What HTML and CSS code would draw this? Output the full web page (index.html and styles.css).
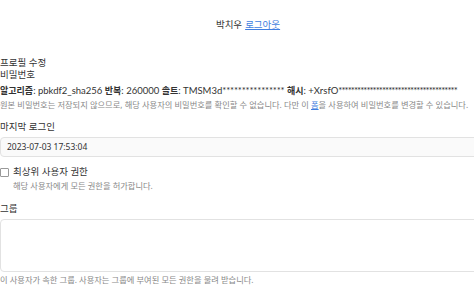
FILE: index.html
```html
<!DOCTYPE html>
<html lang="ko">
<head>
<meta charset="utf-8">
<link rel="stylesheet" href="styles.css">
</head>
<body>
<header class="top">
  <span class="user">박치우</span> <a class="link" href="#">로그아웃</a>
</header>
<main class="content">
  <h1 class="title">프로필 수정</h1>
  <div class="label">비밀번호</div>
  <p class="hash"><b>알고리즘</b>: pbkdf2_sha256 <b>반복</b>: 260000 <b>솔트</b>: TMSM3d<span class="mask salt">****************</span> <b>해시</b>: +XrsfO<span class="mask digest">**************************************</span></p>
  <p class="help">원본 비밀번호는 저장되지 않으므로, 해당 사용자의 비밀번호를 확인할 수 없습니다. 다만 이 <a class="link" href="#">폼</a>을 사용하여 비밀번호를 변경할 수 있습니다.</p>
  <div class="label gap">마지막 로그인</div>
  <div class="field">2023-07-03 17:53:04</div>
  <div class="check-row">
    <span class="box"></span>
    <span class="check-label">최상위 사용자 권한</span>
  </div>
  <p class="help indent">해당 사용자에게 모든 권한을 허가합니다.</p>
  <div class="label gap2">그룹</div>
  <div class="group-box"></div>
  <p class="help">이 사용자가 속한 그룹. 사용자는 그룹에 부여된 모든 권한을 물려 받습니다.</p>
</main>
</body>
</html>
```
FILE: styles.css
```css
html, body {
  margin: 0;
  padding: 0;
  background: #fff;
  overflow: hidden;
}
body {
  font-family: "Noto Sans", "Noto Sans CJK KR", sans-serif;
  color: #333;
  font-size: 10px;
}
.top {
  height: 48px;
  display: flex;
  align-items: center;
  justify-content: center;
  gap: 3px;
  font-size: 9.5px;
  padding-left: 22px;
}
.link {
  color: #3f7ee0;
  text-decoration: underline;
}
.content {
  padding-top: 9px;
}
.title {
  margin: 0;
  font-size: 9.5px;
  font-weight: normal;
  line-height: 12px;
}
.label {
  font-size: 9.5px;
  line-height: 12px;
}
.label.gap {
  margin-top: 10px;
}
.label.gap2 {
  margin-top: 11px;
}
.hash {
  margin: 4px 0 0;
  font-family: "Lato", "Noto Sans CJK KR", sans-serif;
  font-size: 9.5px;
  line-height: 12px;
  white-space: nowrap;
}
.hash b {
  font-family: "Noto Sans CJK KR", sans-serif;
  font-weight: bold;
  font-size: 9px;
}
.mask.salt {
  letter-spacing: -0.15px;
}
.mask.digest {
  letter-spacing: -0.92px;
}
.help {
  margin: 2px 0 0;
  font-size: 8.25px;
  line-height: 12px;
  color: #888;
  white-space: nowrap;
}
.help.indent {
  padding-left: 13px;
}
.field {
  margin-top: 4px;
  height: 18px;
  width: calc(100% + 10px);
  border: 1px solid #e2e2e2;
  border-radius: 4px;
  background: #fafafa;
  font-size: 8.5px;
  line-height: 18px;
  padding-left: 6px;
  box-sizing: content-box;
}
.check-row {
  display: flex;
  align-items: center;
  gap: 4px;
  margin-top: 9px;
  height: 12px;
}
.box {
  width: 7px;
  height: 7px;
  border: 1px solid #999;
  border-radius: 1px;
  background: #fff;
}
.check-label {
  font-size: 9.5px;
  line-height: 12px;
}
.group-box {
  margin-top: 4px;
  height: 51px;
  width: calc(100% + 10px);
  border: 1px solid #e2e2e2;
  border-radius: 4px;
  background: #fff;
}
```
